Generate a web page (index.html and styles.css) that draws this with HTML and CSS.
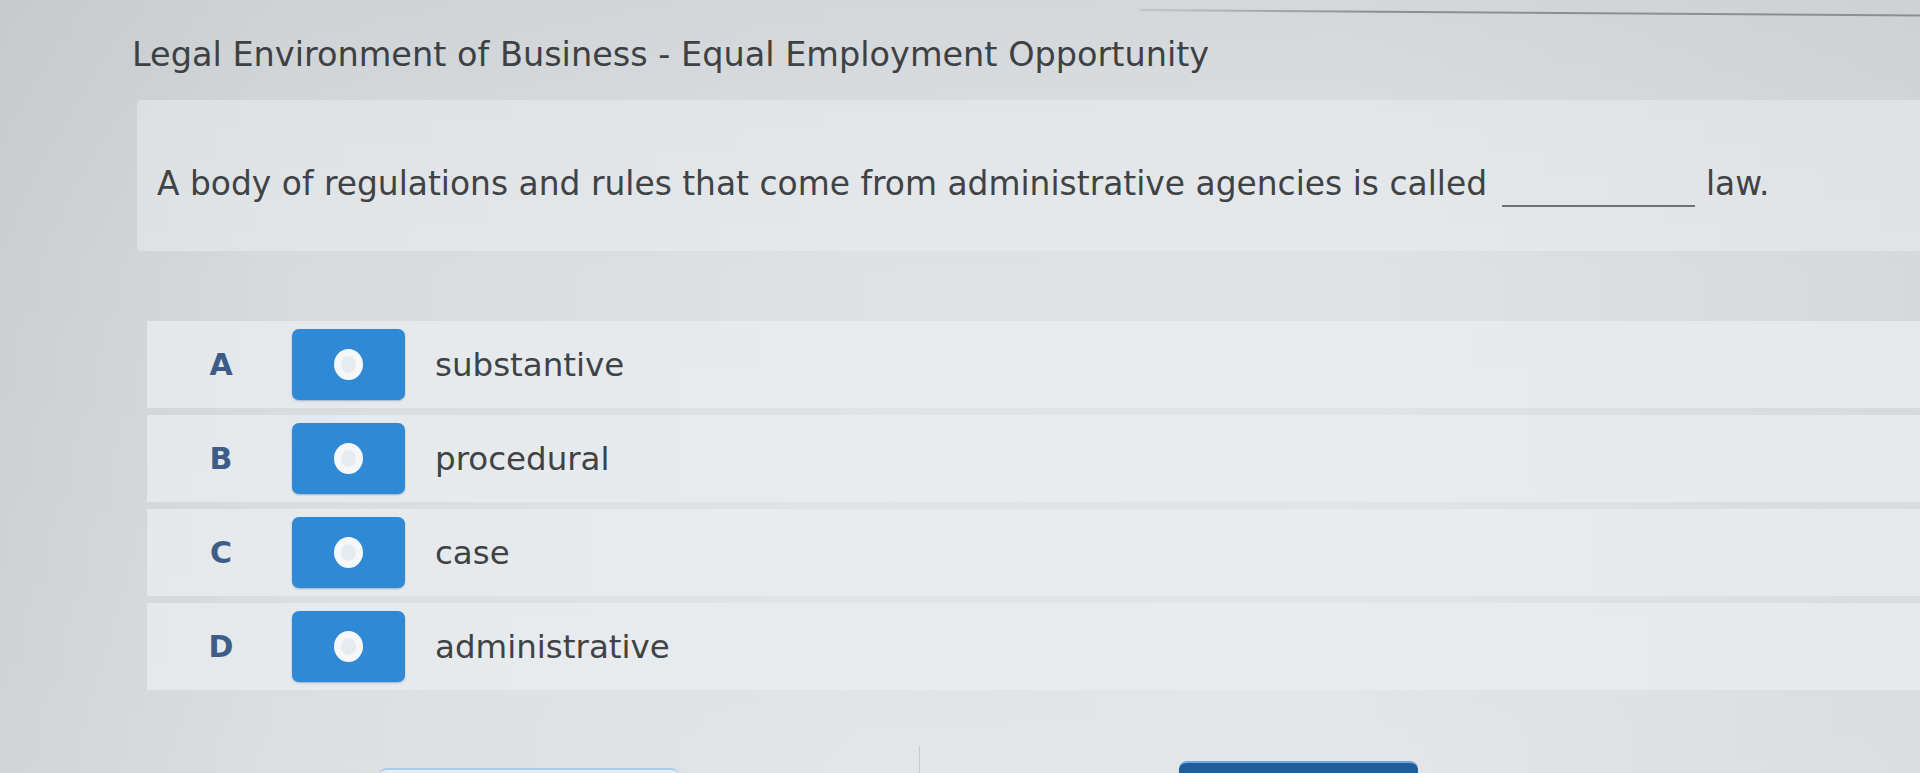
FILE: index.html
```html
<!DOCTYPE html>
<html lang="en">
<head>
<meta charset="utf-8">
<title>Legal Environment of Business - Equal Employment Opportunity</title>
<link rel="stylesheet" href="styles.css">
</head>
<body>
<div class="topline"></div>
<main class="page">
  <h1 class="title">Legal Environment of Business - Equal Employment Opportunity</h1>
  <section class="card">
    <p class="question">A body of regulations and rules that come from administrative agencies is called <span class="blank"></span> law.</p>
  </section>
  <ul class="options">
    <li class="option"><span class="letter">A</span><span class="radio-box"><span class="radio"></span></span><span class="label">substantive</span></li>
    <li class="option"><span class="letter">B</span><span class="radio-box"><span class="radio"></span></span><span class="label">procedural</span></li>
    <li class="option"><span class="letter">C</span><span class="radio-box"><span class="radio"></span></span><span class="label">case</span></li>
    <li class="option"><span class="letter">D</span><span class="radio-box"><span class="radio"></span></span><span class="label">administrative</span></li>
  </ul>
  <footer class="footer">
    <span class="btn btn-light"></span>
    <span class="divider"></span>
    <span class="btn btn-dark"></span>
  </footer>
</main>
</body>
</html>
```
FILE: styles.css
```css
html, body {
  margin: 0;
  padding: 0;
}
body {
  width: 1920px;
  height: 773px;
  overflow: hidden;
  position: relative;
  font-family: "DejaVu Sans", "Liberation Sans", sans-serif;
  color: #434649;
  background:
    linear-gradient(180deg, rgba(190,194,198,0.35) 0%, rgba(255,255,255,0) 35%, rgba(255,255,255,0.12) 100%),
    linear-gradient(90deg, #cbcfd2 0%, #d8dbde 15%, #dfe2e5 45%, #e0e3e6 70%, #d6d9dc 100%);
}
.topline {
  position: absolute;
  left: 1140px;
  right: 0;
  top: 9px;
  height: 2px;
  background: linear-gradient(90deg, rgba(120,124,128,0.2), #8b8f93 30%, #8b8f93);
  transform: rotate(0.4deg);
  transform-origin: left center;
}
.page {
  padding: 36px 0 0 132px;
}
.title {
  margin: 0;
  font-size: 33.5px;
  line-height: 38px;
  font-weight: normal;
  color: #3e4144;
}
.card {
  margin: 26px 0 0 5px;
  height: 151px;
  box-sizing: border-box;
  padding: 65px 0 0 20px;
  background: rgba(236,239,241,0.5);
  border-radius: 4px 0 0 4px;
}
.question {
  margin: 0;
  font-size: 32.9px;
  line-height: 38px;
  color: #404346;
  white-space: nowrap;
}
.blank {
  display: inline-block;
  width: 193px;
  height: 0;
  border-bottom: 2px solid #6e7276;
  margin: 0 0 0 5px;
  vertical-align: -12px;
}
.options {
  list-style: none;
  margin: 70px 0 0 15px;
  padding: 0;
  display: flex;
  flex-direction: column;
  gap: 7px;
}
.option {
  height: 87px;
  display: flex;
  align-items: center;
  background: rgba(234,237,240,0.75);
}
.letter {
  width: 145px;
  padding-left: 3px;
  box-sizing: border-box;
  text-align: center;
  font-weight: bold;
  font-size: 30px;
  color: #3d5c88;
}
.radio-box {
  width: 113px;
  height: 71px;
  border-radius: 7px;
  background: #2f89d4;
  display: flex;
  align-items: center;
  justify-content: center;
  box-shadow: 0 1px 2px rgba(30,70,120,0.35);
}
.radio {
  width: 15px;
  height: 17px;
  border: 7px solid #f5f7f9;
  border-radius: 50%;
  background: #e6ebf0;
}
.label {
  margin-left: 30px;
  font-size: 32.5px;
  color: #404346;
}
.footer {
  display: flex;
  align-items: flex-start;
  margin-top: 71px;
  height: 40px;
}
.btn {
  display: block;
  height: 40px;
  border-radius: 8px 8px 0 0;
}
.btn-light {
  margin: 7px 0 0 247px;
  width: 300px;
  background: #e7edf3;
  border-top: 2px solid #a9cbe9;
}
.divider {
  width: 1px;
  height: 40px;
  margin: -15px 0 0 240px;
  background: rgba(150,155,160,0.35);
}
.btn-dark {
  margin-left: 259px;
  width: 239px;
  background: #1f5d9c;
  border-top: 2px solid #6fa8df;
}
```
